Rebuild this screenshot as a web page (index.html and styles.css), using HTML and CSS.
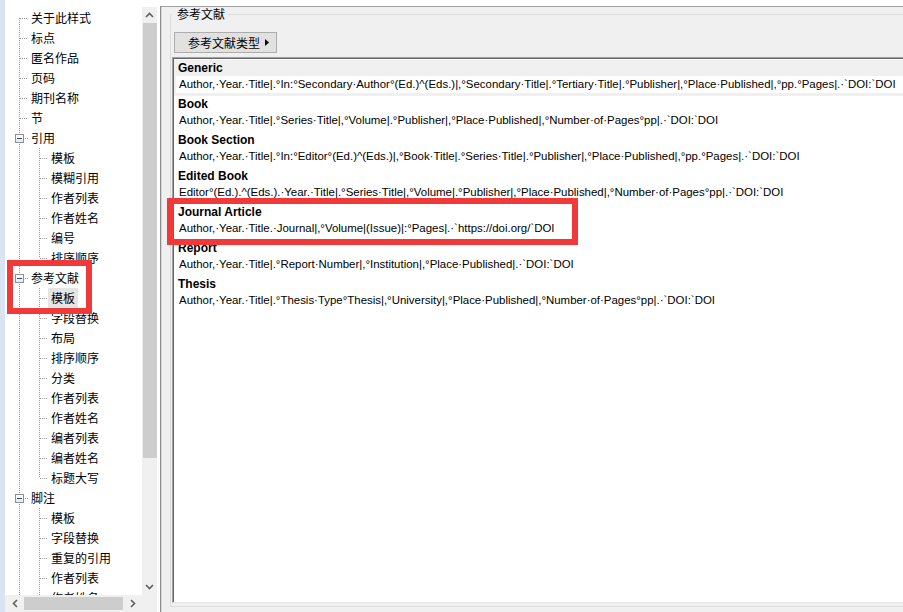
FILE: index.html
```html
<!DOCTYPE html>
<html lang="zh-CN">
<head>
<meta charset="utf-8">
<title>参考文献 - 模板</title>
<link rel="stylesheet" href="styles.css">
</head>
<body>
<div class="app">
  <div class="edge"></div>
  <div class="left">
    <div class="treeview">
      <div class="tree">
        <div class="row l1"><span class="conn"><i class="h"></i></span><span class="tx">关于此样式</span></div>
        <div class="row l1"><span class="conn"><i class="h"></i></span><span class="tx">标点</span></div>
        <div class="row l1"><span class="conn"><i class="h"></i></span><span class="tx">匿名作品</span></div>
        <div class="row l1"><span class="conn"><i class="h"></i></span><span class="tx">页码</span></div>
        <div class="row l1"><span class="conn"><i class="h"></i></span><span class="tx">期刊名称</span></div>
        <div class="row l1"><span class="conn"><i class="h"></i></span><span class="tx">节</span></div>
        <div class="row l1"><span class="conn"><b class="box"><i></i></b><i class="h"></i></span><span class="tx">引用</span></div>
        <div class="kids">
          <div class="row l2"><span class="conn"><i class="h"></i></span><span class="tx">模板</span></div>
          <div class="row l2"><span class="conn"><i class="h"></i></span><span class="tx">模糊引用</span></div>
          <div class="row l2"><span class="conn"><i class="h"></i></span><span class="tx">作者列表</span></div>
          <div class="row l2"><span class="conn"><i class="h"></i></span><span class="tx">作者姓名</span></div>
          <div class="row l2"><span class="conn"><i class="h"></i></span><span class="tx">编号</span></div>
          <div class="row l2"><span class="conn"><i class="h"></i></span><span class="tx">排序顺序</span></div>
        </div>
        <div class="row l1"><span class="conn"><b class="box"><i></i></b><i class="h"></i></span><span class="tx">参考文献</span></div>
        <div class="kids">
          <div class="row l2"><span class="conn"><i class="h"></i></span><span class="tx sel">模板</span></div>
          <div class="row l2"><span class="conn"><i class="h"></i></span><span class="tx">字段替换</span></div>
          <div class="row l2"><span class="conn"><i class="h"></i></span><span class="tx">布局</span></div>
          <div class="row l2"><span class="conn"><i class="h"></i></span><span class="tx">排序顺序</span></div>
          <div class="row l2"><span class="conn"><i class="h"></i></span><span class="tx">分类</span></div>
          <div class="row l2"><span class="conn"><i class="h"></i></span><span class="tx">作者列表</span></div>
          <div class="row l2"><span class="conn"><i class="h"></i></span><span class="tx">作者姓名</span></div>
          <div class="row l2"><span class="conn"><i class="h"></i></span><span class="tx">编者列表</span></div>
          <div class="row l2"><span class="conn"><i class="h"></i></span><span class="tx">编者姓名</span></div>
          <div class="row l2"><span class="conn"><i class="h"></i></span><span class="tx">标题大写</span></div>
        </div>
        <div class="row l1"><span class="conn"><b class="box"><i></i></b><i class="h"></i></span><span class="tx">脚注</span></div>
        <div class="kids">
          <div class="row l2"><span class="conn"><i class="h"></i></span><span class="tx">模板</span></div>
          <div class="row l2"><span class="conn"><i class="h"></i></span><span class="tx">字段替换</span></div>
          <div class="row l2"><span class="conn"><i class="h"></i></span><span class="tx">重复的引用</span></div>
          <div class="row l2"><span class="conn"><i class="h"></i></span><span class="tx">作者列表</span></div>
          <div class="row l2"><span class="conn"><i class="h"></i></span><span class="tx">作者姓名</span></div>
          <div class="row l2"><span class="conn"><i class="h"></i></span><span class="tx">编者列表</span></div>
          <div class="row l2"><span class="conn"><i class="h"></i></span><span class="tx">编者姓名</span></div>
        </div>
      </div>
      <div class="vscroll">
        <div class="sarrow up"><svg width="9" height="6" viewBox="0 0 9 6"><polyline points="1,5 4.5,1.5 8,5" fill="none" stroke="#606060" stroke-width="1.6"/></svg></div>
        <div class="vthumb"></div>
        <div class="vspace"></div>
        <div class="sarrow down"><svg width="9" height="6" viewBox="0 0 9 6"><polyline points="1,1 4.5,4.5 8,1" fill="none" stroke="#606060" stroke-width="1.6"/></svg></div>
      </div>
    </div>
    <div class="hrow">
      <div class="hscroll">
        <div class="harrow"><svg width="6" height="9" viewBox="0 0 6 9"><polyline points="5,1 1.5,4.5 5,8" fill="none" stroke="#606060" stroke-width="1.6"/></svg></div>
        <div class="hthumb"></div>
        <div class="hspace"></div>
        <div class="harrow"><svg width="6" height="9" viewBox="0 0 6 9"><polyline points="1,1 4.5,4.5 1,8" fill="none" stroke="#606060" stroke-width="1.6"/></svg></div>
      </div>
      <div class="corner"></div>
    </div>
  </div>
  <div class="gap"></div>
  <div class="right">
    <fieldset class="group">
      <legend>参考文献</legend>
      <button class="typebtn" type="button"><span>参考文献类型</span><svg width="4" height="7" viewBox="0 0 4 7"><polygon points="0,0 4,3.5 0,7" fill="#000"/></svg></button>
      <div class="list">
        <div class="item active">
          <div class="hd">Generic</div>
          <div class="tpl">Author,·Year.·Title|.°In:°Secondary·Author°(Ed.)^(Eds.)|,°Secondary·Title|.°Tertiary·Title|.°Publisher|,°Place·Published|,°pp.°Pages|.·`DOI:`DOI</div>
        </div>
        <div class="item">
          <div class="hd">Book</div>
          <div class="tpl">Author,·Year.·Title|.°Series·Title|,°Volume|.°Publisher|,°Place·Published|,°Number·of·Pages°pp|.·`DOI:`DOI</div>
        </div>
        <div class="item">
          <div class="hd">Book Section</div>
          <div class="tpl">Author,·Year.·Title|.°In:°Editor°(Ed.)^(Eds.)|,°Book·Title|.°Series·Title|.°Publisher|,°Place·Published|,°pp.°Pages|.·`DOI:`DOI</div>
        </div>
        <div class="item">
          <div class="hd">Edited Book</div>
          <div class="tpl">Editor°(Ed.).^(Eds.).·Year.·Title|.°Series·Title|,°Volume|.°Publisher|,°Place·Published|,°Number·of·Pages°pp|.·`DOI:`DOI</div>
        </div>
        <div class="item">
          <div class="hd">Journal Article</div>
          <div class="tpl">Author,·Year.·Title.·Journal|,°Volume|(Issue)|:°Pages|.·`https://doi.org/`DOI</div>
        </div>
        <div class="item">
          <div class="hd">Report</div>
          <div class="tpl">Author,·Year.·Title|.°Report·Number|,°Institution|,°Place·Published|.·`DOI:`DOI</div>
        </div>
        <div class="item">
          <div class="hd">Thesis</div>
          <div class="tpl">Author,·Year.·Title|.°Thesis·Type°Thesis|,°University|,°Place·Published|,°Number·of·Pages°pp|.·`DOI:`DOI</div>
        </div>
      </div>
    </fieldset>
  </div>
  <div class="mark mark-tree"></div>
  <div class="mark mark-journal"></div>
</div>
</body>
</html>
```

FILE: styles.css
```css
* { box-sizing: border-box; }
html, body { margin: 0; padding: 0; }
body {
  width: 903px;
  height: 612px;
  overflow: hidden;
  background: #fff;
  color: #000;
  font-family: "Liberation Sans", Arial, sans-serif;
  font-size: 12px;
}
.app {
  position: relative;
  display: flex;
  height: 612px;
}
.edge {
  flex: none;
  width: 5px;
  background: #d8e4f1;
}

/* ---------- left tree panel ---------- */
.left {
  flex: none;
  width: 152px;
  display: flex;
  flex-direction: column;
  padding-top: 7px;
  background: #fff;
}
.treeview {
  flex: 1;
  min-height: 0;
  display: flex;
}
.tree {
  flex: 1;
  min-width: 0;
  overflow: hidden;
  padding-top: 1px;
  font-family: "Noto Sans CJK SC", "Noto Sans", sans-serif;
  font-size: 12px;
  background-image: repeating-linear-gradient(to bottom, #9a9a9a 0 1px, transparent 1px 2px);
  background-size: 1px 100%;
  background-position: 14px 11px;
  background-repeat: no-repeat;
}
.row {
  display: flex;
  align-items: center;
  height: 20px;
  white-space: nowrap;
}
.row.l1 { padding-left: 5px; }
.row.l2 { padding-left: 25px; }
.conn {
  flex: none;
  width: 18px;
  height: 20px;
  display: flex;
  align-items: center;
}
.h {
  display: block;
  width: 8px;
  height: 1px;
  margin-left: auto;
  background-image: repeating-linear-gradient(to right, #9a9a9a 0 1px, transparent 1px 2px);
}
.box {
  flex: none;
  width: 9px;
  height: 9px;
  margin-left: 5px;
  border: 1px solid #8f8f8f;
  background: linear-gradient(#ffffff, #e9e9e9);
  display: flex;
  align-items: center;
  justify-content: center;
}
.box i {
  display: block;
  width: 5px;
  height: 1px;
  background: #2a4a8a;
}
.box + .h { width: auto; flex: 1; margin-left: 1px; }
.tx {
  padding: 0 3px;
  line-height: 20px;
  height: 20px;
}
.tx.sel { background: #e5e5e5; }
.kids {
  background-image: repeating-linear-gradient(to bottom, #9a9a9a 0 1px, transparent 1px 2px);
  background-size: 1px calc(100% - 10px);
  background-position: 34px 0;
  background-repeat: no-repeat;
}

.vscroll {
  flex: none;
  width: 15px;
  background: #f0f0f0;
  display: flex;
  flex-direction: column;
  align-items: center;
}
.sarrow {
  flex: none;
  width: 15px;
  height: 16px;
  display: flex;
  align-items: center;
  justify-content: center;
}
.vthumb {
  flex: none;
  width: 14px;
  height: 435px;
  background: #cdcdcd;
}
.vspace { flex: 1; }
.sarrow.down { height: 17px; }

.hrow {
  flex: none;
  height: 17px;
  display: flex;
}
.hscroll {
  flex: 1;
  display: flex;
  align-items: center;
  background: #f0f0f0;
}
.harrow {
  flex: none;
  width: 19px;
  height: 17px;
  display: flex;
  align-items: center;
  justify-content: center;
}
.hthumb {
  flex: none;
  width: 99px;
  height: 13px;
  background: #cdcdcd;
}
.hspace { flex: 1; }
.corner {
  flex: none;
  width: 15px;
  background: #f0f0f0;
}

.gap {
  flex: none;
  width: 3px;
  background: #fff;
}

/* ---------- right panel ---------- */
.right {
  flex: 1;
  min-width: 0;
  margin-top: 6px;
  border-top: 1px solid #a0a0a0;
  border-left: 1px solid #8c8c8c;
  box-shadow: inset 1px 0 #d6d6d6;
  background: #f0f0f0;
  display: flex;
  flex-direction: column;
}
.group {
  flex: 1;
  min-width: 0;
  min-height: 0;
  margin: 0 0 5px 9px;
  padding: 0 0 3px 1px;
  border: 1px solid #dcdcdc;
  border-right: none;
  display: flex;
  flex-direction: column;
}
.group legend {
  padding: 0 3px 0 5px;
  margin: 0;
  line-height: 14px;
  font-family: "Noto Sans CJK SC", "Noto Sans", sans-serif;
  font-size: 12px;
}
.typebtn {
  align-self: flex-start;
  margin: 11px 0 0 2px;
  width: 103px;
  height: 21px;
  padding: 0 0 0 13px;
  border: 1px solid #adadad;
  border-radius: 0;
  background: #e1e1e1;
  color: #000;
  display: flex;
  align-items: center;
  gap: 5px;
  font-family: "Noto Sans CJK SC", "Noto Sans", sans-serif;
  font-size: 12px;
  line-height: 19px;
}
.list {
  flex: 1;
  min-height: 0;
  margin-top: 4px;
  padding: 2px 0 0 1px;
  border-top: 1px solid #a0a0a0;
  border-left: 1px solid #a0a0a0;
  border-bottom: 1px solid #e3e3e3;
  box-shadow: inset 1px 1px #696969;
  background: #fff;
  overflow: hidden;
}
.item {
  padding: 0 0 3px 2px;
}
.item.active { background: #f0f0f0; }
.hd {
  height: 16px;
  line-height: 16px;
  padding-left: 2px;
  font-weight: bold;
  white-space: nowrap;
}
.tpl {
  height: 17px;
  line-height: 17px;
  padding-left: 3px;
  font-size: 11.45px;
  white-space: nowrap;
  background: #fff;
}

/* ---------- annotation boxes ---------- */
.mark {
  position: absolute;
  border: 6px solid #f03a3a;
  pointer-events: none;
}
.mark-tree { left: 7px; top: 260px; width: 85px; height: 54px; }
.mark-journal { left: 167px; top: 198px; width: 411px; height: 47px; }
```
